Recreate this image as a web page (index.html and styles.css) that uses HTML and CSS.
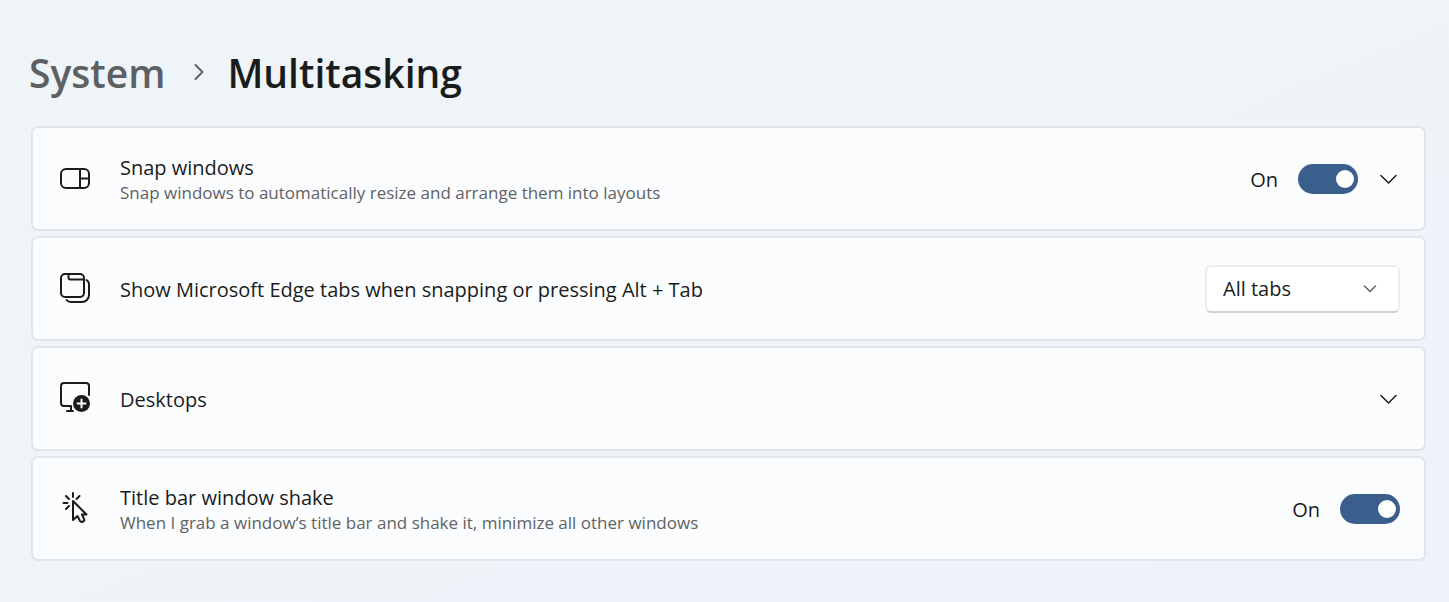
FILE: index.html
```
<!DOCTYPE html>
<html lang="en">
<head>
    <meta charset="UTF-8">
    <meta name="viewport" content="width=device-width, initial-scale=1.0">
    <title>Multitasking</title>
    <link rel="stylesheet" href="styles.css">
</head>
<body>
    <main class="page">
        <!-- Breadcrumb -->
        <nav class="breadcrumb">
            <a href="#system">System</a>
            <svg class="separator" width="12" height="18" viewBox="0 0 12 18"><path d="M2.500 2l7 7-7 7"/></svg>
            <h1>Multitasking</h1>
        </nav>

        <!-- Settings cards -->
        <div class="settings">
            <section class="card">
                <svg class="icon" width="32" height="32" viewBox="0 0 32 32">
                    <rect x="2" y="6" width="28" height="19" rx="5"/>
                    <path d="M21 6v19M21 15.500H30"/>
                </svg>
                <div class="text">
                    <label class="title" for="snap">Snap windows</label>
                    <p class="description">Snap windows to automatically resize and arrange them into layouts</p>
                </div>
                <label class="state" for="snap">On</label>
                <input type="checkbox" role="switch" class="toggle" id="snap" checked>
                <button class="expand" aria-label="Show snap options">
                    <svg width="20" height="12" viewBox="0 0 20 12"><path d="M3 2.500l7.500 7.500 7.500-7.500"/></svg>
                </button>
            </section>

            <section class="card">
                <svg class="icon" width="32" height="32" viewBox="0 0 32 32">
                    <rect x="2" y="1" width="23" height="23" rx="4"/>
                    <path d="M9.500 1v3.500a2 2 0 0 0 2 2H25M27.500 7q2.500 1.500 2.500 4.500v10.500a7 7 0 0 1-7 7h-11q-3 0-4.500-2"/>
                </svg>
                <div class="text">
                    <label class="title" for="tabs">Show Microsoft Edge tabs when snapping or pressing Alt + Tab</label>
                </div>
                <div class="dropdown">
                    <select id="tabs">
                        <option>All tabs</option>
                        <option>5 most recent tabs</option>
                        <option>3 most recent tabs</option>
                        <option>Don't show tabs</option>
                    </select>
                    <svg width="14" height="10" viewBox="0 0 14 10"><path d="M1.500 2L7 7.500 12.500 2"/></svg>
                </div>
            </section>

            <section class="card">
                <svg class="icon" width="32" height="32" viewBox="0 0 32 32">
                    <path d="M30 12V3a3 3 0 0 0-3-3H5a3 3 0 0 0-3 3v17a3 3 0 0 0 3 3h7v5M8 28h6"/>
                    <circle class="badge" cx="22.500" cy="20.500" r="8.500"/>
                    <path class="plus" d="M22.500 16.500v8M18.500 20.500h8"/>
                </svg>
                <div class="text">
                    <span class="title">Desktops</span>
                </div>
                <button class="expand" aria-label="Show desktop options">
                    <svg width="20" height="12" viewBox="0 0 20 12"><path d="M3 2.500l7.500 7.500 7.500-7.500"/></svg>
                </button>
            </section>

            <section class="card">
                <svg class="icon" width="32" height="32" viewBox="0 0 32 32">
                    <path d="M14 8v19l4.500-4 2.500 5q1 1.500 3 .5t1-2.500l-2-4.500H27.500zM14 0v4M7 3l3 3M20.500 3l-3 3M4.500 10h4M7 16l3-3"/>
                </svg>
                <div class="text">
                    <label class="title" for="shake">Title bar window shake</label>
                    <p class="description">When I grab a window’s title bar and shake it, minimize all other windows</p>
                </div>
                <label class="state" for="shake">On</label>
                <input type="checkbox" role="switch" class="toggle" id="shake" checked>
            </section>
        </div>
    </main>
</body>
</html>
```

FILE: styles.css
```
* {
    box-sizing: border-box;
}

body {
    margin: 0;
    min-height: 100vh;
    background: linear-gradient(to bottom right, #eef4f8 50%, #eef3fb);
    color: #1a1c1c;
    font-family: "Open Sans", "Noto Sans", sans-serif;
    font-size: 20px;
}

.page {
    padding: 44px 23px 40px 31px;
}

svg {
    fill: none;
    overflow: visible;
    stroke: #1a1c1c;
    stroke-width: 2;
    stroke-linecap: round;
    stroke-linejoin: round;
}

/* Breadcrumb */
.breadcrumb {
    display: flex;
    align-items: center;
    gap: 22px;
    height: 56px;
    margin: 0 0 26px -2px;
    font-size: 39px;
    font-weight: 600;
}

.breadcrumb a {
    color: #5d6062;
    text-decoration: none;
}

.breadcrumb h1 {
    margin: 0;
    font-size: 39px;
    font-weight: 600;
}

.separator {
    margin-left: 6px;
    stroke: #5d6062;
}

/* Cards */
.settings {
    display: flex;
    flex-direction: column;
    gap: 5px;
}

.card {
    display: flex;
    align-items: center;
    min-height: 105px;
    padding: 0 24px 0 26px;
    background-color: #fbfcfe;
    border: 2px solid #e0e6eb;
    border-radius: 7px;
}

.icon {
    flex: none;
    margin-right: 29px;
}

.icon .badge {
    fill: #1a1c1c;
    stroke: none;
}

.icon .plus {
    stroke: #fbfcfe;
}

.text {
    flex: 1;
    padding-top: 2px;
}

.state {
    padding-top: 2px;
}

.title {
    display: block;
    line-height: 26px;
}

.description {
    margin: 0;
    color: #606264;
    font-size: 17px;
    line-height: 24px;
}

/* Toggle switch */
.toggle {
    appearance: none;
    display: flex;
    align-items: center;
    justify-content: flex-end;
    width: 60px;
    height: 30px;
    margin: 0 0 0 20px;
    padding: 0 4px;
    background-color: #3a5f8c;
    border-radius: 15px;
    cursor: pointer;
}

.toggle::before {
    content: "";
    width: 18px;
    height: 18px;
    background-color: white;
    border-radius: 50%;
}

.toggle:not(:checked) {
    justify-content: flex-start;
    background-color: #8a8d90;
}

.expand {
    display: flex;
    margin: 0 2px 0 20px;
    padding: 0;
    background: none;
    border: none;
    cursor: pointer;
}

.expand svg {
    stroke-width: 1.5;
}

/* Dropdown */
.dropdown {
    display: grid;
    grid-template-columns: 100%;
    align-items: center;
    width: 195px;
}

.dropdown select,
.dropdown svg {
    grid-area: 1 / 1;
}

.dropdown select {
    appearance: none;
    width: 100%;
    height: 48px;
    padding: 0 16px;
    background-color: white;
    border: 2px solid #ebedee;
    border-bottom-color: #d0d2d3;
    border-radius: 6px;
    color: #1a1c1c;
    font-family: inherit;
    font-size: 20px;
}

.dropdown svg {
    justify-self: end;
    margin-right: 23px;
    stroke: #5d6062;
    stroke-width: 1.5;
    pointer-events: none;
}
```
